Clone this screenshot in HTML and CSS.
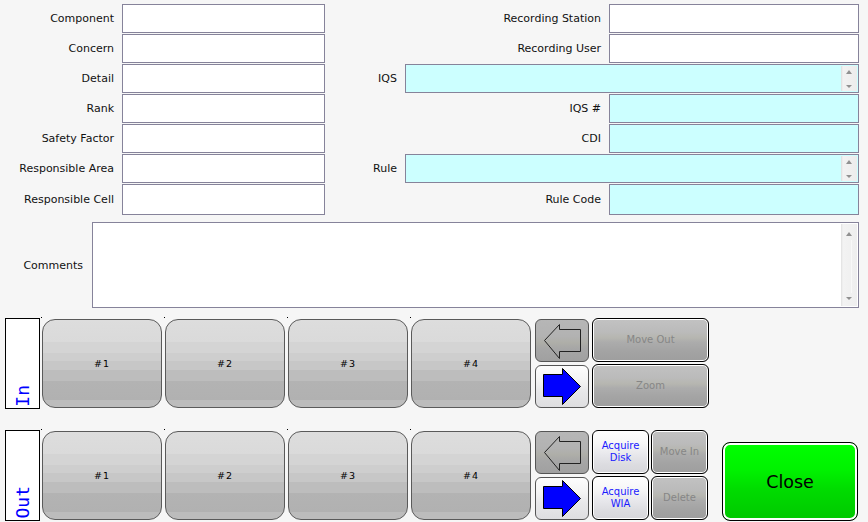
FILE: index.html
```html
<!DOCTYPE html>
<html lang="en">
<head>
    <meta charset="UTF-8">
    <title>Defect Entry</title>
    <link rel="stylesheet" href="styles.css">
</head>
<body>
    <div class="form">
        <label>Component</label><input type="text">
        <label>Recording Station</label><input type="text">

        <label>Concern</label><input type="text">
        <label>Recording User</label><input type="text">

        <label>Detail</label><input type="text">
        <div class="wide">
            <label>IQS</label>
            <div class="field cyan"><div class="spin"><span class="up"></span><span class="down"></span></div></div>
        </div>

        <label>Rank</label><input type="text">
        <label>IQS #</label><input type="text" class="cyan">

        <label>Safety Factor</label><input type="text">
        <label>CDI</label><input type="text" class="cyan">

        <label>Responsible Area</label><input type="text">
        <div class="wide">
            <label>Rule</label>
            <div class="field cyan"><div class="spin"><span class="up"></span><span class="down"></span></div></div>
        </div>

        <label>Responsible Cell</label><input type="text">
        <label>Rule Code</label><input type="text" class="cyan">
    </div>

    <div class="comments">
        <label>Comments</label>
        <div class="memo"><div class="vscroll"><span class="up"></span><span class="track"></span><span class="down"></span></div></div>
    </div>

    <div class="section">
        <div class="tag"><span>In</span></div>
        <div class="slots">
            <button class="slot">#1</button>
            <button class="slot">#2</button>
            <button class="slot">#3</button>
            <button class="slot">#4</button>
        </div>
        <div class="arrows">
            <button class="arrow left">
                <svg width="54" height="43" viewBox="0 0 54 43"><polygon points="9.5,21.5 24.5,5.5 24.5,10.5 45.5,10.5 45.5,32.5 24.5,32.5 24.5,39.5" fill="none" stroke="#222" stroke-width="1"/></svg>
            </button>
            <button class="arrow right">
                <svg width="54" height="43" viewBox="0 0 54 43"><polygon points="8.5,9.5 27.5,9.5 27.5,3.5 45.5,21.5 27.5,39.5 27.5,31.5 8.5,31.5" fill="#0000ff" stroke="#000" stroke-width="1"/></svg>
            </button>
        </div>
        <div class="actions">
            <button class="act grey">Move Out</button>
            <button class="act grey">Zoom</button>
        </div>
    </div>

    <div class="section">
        <div class="tag"><span>Out</span></div>
        <div class="slots">
            <button class="slot">#1</button>
            <button class="slot">#2</button>
            <button class="slot">#3</button>
            <button class="slot">#4</button>
        </div>
        <div class="arrows">
            <button class="arrow left">
                <svg width="54" height="43" viewBox="0 0 54 43"><polygon points="9.5,21.5 24.5,5.5 24.5,10.5 45.5,10.5 45.5,32.5 24.5,32.5 24.5,39.5" fill="none" stroke="#222" stroke-width="1"/></svg>
            </button>
            <button class="arrow right">
                <svg width="54" height="43" viewBox="0 0 54 43"><polygon points="8.5,9.5 27.5,9.5 27.5,3.5 45.5,21.5 27.5,39.5 27.5,31.5 8.5,31.5" fill="#0000ff" stroke="#000" stroke-width="1"/></svg>
            </button>
        </div>
        <div class="acquire">
            <button class="act light">Acquire<br>Disk</button>
            <button class="act grey">Move In</button>
            <button class="act light">Acquire<br>WIA</button>
            <button class="act grey">Delete</button>
        </div>
        <button class="close">Close</button>
    </div>
</body>
</html>
```

FILE: styles.css
```css
* {
    box-sizing: border-box;
}
body {
    margin: 0;
    background-color: #f6f6f6;
    font-family: "DejaVu Sans", Verdana, sans-serif;
    font-size: 11px;
    color: #111;
}
label {
    text-align: right;
    align-self: center;
}
input,
.field {
    height: 100%;
    margin: 0;
    padding: 0;
    border: 1px solid #86839a;
    background-color: #fff;
    font: inherit;
}
.cyan {
    background-color: #ccffff;
}

/* top form */
.form {
    display: grid;
    grid-template-columns: 114px 203px 1fr 250px;
    grid-template-rows: repeat(6, 29px) 31px;
    column-gap: 8px;
    row-gap: 1px;
    padding: 4px 9px 0 0;
}
.wide {
    grid-column: 3 / 5;
    display: flex;
    gap: 8px;
}
.wide label {
    width: 64px;
    flex: none;
}
.field {
    flex: 1;
    display: flex;
    justify-content: flex-end;
    padding: 1px;
}
.spin {
    width: 16px;
    background: linear-gradient(to right, #dcdcdc, #f2f2f2 2px, #ececec);
    display: flex;
    flex-direction: column;
    justify-content: space-between;
    align-items: center;
    padding: 4px 0 3px;
}
.up {
    width: 0;
    height: 0;
    border-left: 3px solid transparent;
    border-right: 3px solid transparent;
    border-bottom: 4px solid #909090;
}
.down {
    width: 0;
    height: 0;
    border-left: 3px solid transparent;
    border-right: 3px solid transparent;
    border-top: 3px solid #909090;
}

/* comments */
.comments {
    display: flex;
    gap: 9px;
    margin-top: 7px;
    height: 86px;
    padding-right: 9px;
}
.comments label {
    width: 83px;
    flex: none;
}
.memo {
    flex: 1;
    border: 1px solid #86839a;
    background-color: #fff;
    display: flex;
    justify-content: flex-end;
    padding: 1px;
}
.vscroll {
    width: 16px;
    background: linear-gradient(to right, #e0e0e0, #f3f3f3 2px, #eeeeee);
    display: flex;
    flex-direction: column;
    align-items: center;
    padding: 8px 0 6px;
}
.track {
    flex: 1;
    width: 1px;
    margin: 4px 0 4px 4px;
    background-color: #f8f8f8;
}

/* in / out rows */
.section {
    display: flex;
    align-items: flex-start;
    height: 91px;
    margin-top: 10px;
    padding-left: 5px;
}
.section + .section {
    margin-top: 21px;
}
.tag {
    width: 35px;
    height: 91px;
    border: 1px solid #000;
    background-color: #fff;
    display: flex;
    align-items: flex-end;
    justify-content: center;
    padding-bottom: 1px;
}
.tag span {
    writing-mode: vertical-rl;
    transform: rotate(180deg);
    font-family: "DejaVu Sans Mono", "Liberation Mono", monospace;
    font-size: 18px;
    line-height: 20px;
    color: #0000ff;
}
button {
    font: inherit;
    margin: 0;
    padding: 0;
    cursor: pointer;
}
.slots {
    display: flex;
    gap: 3px;
    margin: 1px 0 0 2px;
}
.slot {
    position: relative;
    width: 120px;
    height: 89px;
    border: 1px solid #5a5a5a;
    border-radius: 13px;
    font-size: 9.5px;
    letter-spacing: 1px;
    color: #000;
    background: linear-gradient(#dddddd 0%, #dadada 25%, #d4d4d4 25%, #d4d4d4 38%, #cecece 38%, #cecece 47%, #c7c7c7 47%, #c7c7c7 57%, #bdbdbd 57%, #bdbdbd 70%, #b3b3b3 70%, #b1b1b1 92%, #bcbcbc 92%);
}
.slot::before {
    content: "";
    position: absolute;
    left: -2px;
    top: -3px;
    width: 1px;
    height: 1px;
    background-color: #000;
}
.arrows {
    display: flex;
    flex-direction: column;
    gap: 3px;
    margin: 1px 0 0 4px;
}
.arrow {
    width: 54px;
    height: 43px;
    border: 1px solid #555;
    border-radius: 6px;
    display: block;
}
.arrow svg {
    display: block;
    margin: -1px;
}
.arrow.left {
    background: linear-gradient(#b6b6b6 0%, #b2b2b2 40%, #aeaea8 55%, #a6a6a6 70%, #a0a0a0 100%);
}
.arrow.right {
    background: linear-gradient(#fdfdfd 0%, #f4f4f4 35%, #e8e8ea 60%, #dedee0 100%);
}
.actions {
    display: flex;
    flex-direction: column;
    gap: 2px;
    margin-left: 3px;
}
.act {
    border: 1px solid #000;
    border-radius: 6px;
    box-shadow: inset 0 0 0 1px #fff;
    font-size: 10px;
    line-height: 12px;
}
.actions .act {
    width: 117px;
    height: 44px;
}
.grey {
    color: #868686;
    background: linear-gradient(#c2c2c2 0%, #bbbbbb 30%, #b6b6b0 45%, #acacac 55%, #a4a4a4 75%, #9e9e9e 100%);
}
.light {
    color: #1a1aff;
    background: linear-gradient(#fefefe 0%, #f6f6f6 30%, #e8e8ec 55%, #dcdce0 80%, #d6d6da 100%);
}
.acquire {
    display: grid;
    grid-template-columns: 57px 57px;
    grid-template-rows: 44px 44px;
    gap: 2px;
    margin: 0 0 0 3px;
}
.close {
    width: 136px;
    height: 79px;
    margin: 12px 0 0 14px;
    border: 1px solid #000;
    border-radius: 8px;
    box-shadow: inset 0 0 0 2px #fff;
    background: linear-gradient(#00ff00 0%, #00f200 35%, #00dc00 60%, #00c800 100%);
    font-size: 17.5px;
    color: #000;
}
```
